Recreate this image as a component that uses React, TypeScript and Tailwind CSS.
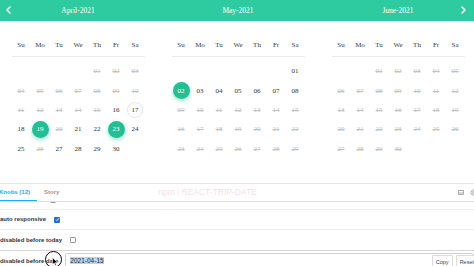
import React from 'react';

type DayState = 'normal' | 'disabled' | 'selected' | 'today';

interface MonthSpec {
  title: string;
  offset: number;
  days: number;
  stateOf: (d: number) => DayState;
}

const weekDays = ['Su', 'Mo', 'Tu', 'We', 'Th', 'Fr', 'Sa'];

const VISIBLE_CELLS = 35;

const months: MonthSpec[] = [
  {
    title: 'April-2021',
    offset: 4,
    days: 30,
    stateOf: (d) => {
      if (d === 19 || d === 23) return 'selected';
      if (d === 17) return 'today';
      if (d <= 15 || d === 20 || d === 26) return 'disabled';
      return 'normal';
    },
  },
  {
    title: 'May-2021',
    offset: 6,
    days: 31,
    stateOf: (d) => {
      if (d === 2) return 'selected';
      if (d >= 9) return 'disabled';
      return 'normal';
    },
  },
  {
    title: 'June-2021',
    offset: 2,
    days: 30,
    stateOf: () => 'disabled',
  },
];

const pad = (n: number) => (n < 10 ? `0${n}` : `${n}`);

const DayCell: React.FC<{ day?: number; state?: DayState }> = ({ day, state }) => {
  if (!day) return <div className="h-[19.4px]" />;
  let inner: React.ReactNode;
  if (state === 'selected') {
    inner = (
      <span className="w-[17px] h-[17px] rounded-full bg-[#22bf94] text-white flex items-center justify-center shadow-[0_2px_4px_rgba(34,191,148,0.45)]">
        {pad(day)}
      </span>
    );
  } else if (state === 'today') {
    inner = (
      <span className="w-[16px] h-[16px] rounded-full border border-[#e6e6e6] text-[#333] flex items-center justify-center">
        {pad(day)}
      </span>
    );
  } else if (state === 'disabled') {
    inner = <span className="text-[#c2c2c2] line-through decoration-[#c2c2c2]">{pad(day)}</span>;
  } else {
    inner = <span className="text-[#333]">{pad(day)}</span>;
  }
  return <div className="h-[19.4px] flex items-center justify-center">{inner}</div>;
};

const Chevron: React.FC<{ dir: 'left' | 'right' }> = ({ dir }) => (
  <svg width="5" height="8" viewBox="0 0 5 8" fill="none">
    <polyline
      points={dir === 'left' ? '4,1 1,4 4,7' : '1,1 4,4 1,7'}
      stroke="white"
      strokeWidth="1.5"
      strokeLinecap="round"
      strokeLinejoin="round"
    />
  </svg>
);

const Month: React.FC<{ spec: MonthSpec; width: string }> = ({ spec, width }) => {
  const cells: (number | undefined)[] = [];
  for (let i = 0; i < spec.offset; i++) cells.push(undefined);
  for (let d = 1; d <= spec.days; d++) cells.push(d);

  return (
    <div className={`${width} shrink-0`}>
      <div className="h-[21px] bg-[#2fcba0] pl-[11.5px] flex items-center">
        <div className="w-[133px] text-center text-white text-[7.5px] leading-none">{spec.title}</div>
      </div>
      <div className="pl-[11.5px]">
        <div className="w-[133px] pt-[18px] pb-[5px] border-b border-[#ececec]">
          <div className="grid grid-cols-7 h-[12px] items-center text-[7px] text-[#3a3a3a]">
            {weekDays.map((w) => (
              <div key={w} className="text-center">
                {w}
              </div>
            ))}
          </div>
        </div>
        <div className="w-[133px] mt-[4.75px] grid grid-cols-7 content-start text-[7px]">
          {cells.slice(0, VISIBLE_CELLS).map((d, i) => (
            <DayCell key={i} day={d} state={d ? spec.stateOf(d) : undefined} />
          ))}
        </div>
      </div>
    </div>
  );
};

const Checkbox: React.FC<{ checked?: boolean }> = ({ checked }) =>
  checked ? (
    <span className="w-[6px] h-[6px] rounded-[1px] bg-[#1a6fdc] flex items-center justify-center">
      <svg width="5" height="5" viewBox="0 0 5 5" fill="none">
        <polyline points="1,2.6 2,3.6 4,1.2" stroke="white" strokeWidth="0.9" />
      </svg>
    </span>
  ) : (
    <span className="w-[6px] h-[6px] rounded-[1px] border border-[#9a9a9a] bg-white" />
  );

export default function App() {
  return (
    <div
      className="w-[474px] h-[266px] bg-white overflow-hidden relative"
      style={{ fontFamily: '"Liberation Serif", serif' }}
    >
      {/* calendars */}
      <div className="h-[183px] relative">
        <div className="flex">
          <Month spec={months[0]} width="w-[160px]" />
          <Month spec={months[1]} width="w-[160px]" />
          <Month spec={months[2]} width="w-[154px]" />
        </div>
        <div className="absolute left-[6px] top-[6px]">
          <Chevron dir="left" />
        </div>
        <div className="absolute left-[461px] top-[6px]">
          <Chevron dir="right" />
        </div>
      </div>

      {/* storybook addon panel */}
      <div
        className="h-[83px] border-t border-[#e8e8e8] flex flex-col"
        style={{ fontFamily: '"Liberation Sans", Arial, sans-serif' }}
      >
        <div className="h-[18px] shrink-0 border-b border-[#e2e2e2] flex items-stretch relative">
          <div className="ml-[-1px] w-[38px] border-b-[1.5px] border-[#1ea7fd] flex items-center text-[6px] font-bold text-[#1ea7fd]">
            Knobs (12)
          </div>
          <div className="ml-[7px] flex items-center text-[6px] font-bold text-[#9a9a9a]">Story</div>
          <div className="ml-[99px] flex items-center text-[8.5px] text-[#f1e2e5]">
            npm i REACT-TRIP-DATE
          </div>
          <div className="ml-auto flex items-center gap-[6px] mr-[-3px]">
            <svg width="6" height="5" viewBox="0 0 6 5" fill="none">
              <rect x="0.5" y="0.5" width="5" height="4" stroke="#9a9a9a" strokeWidth="0.8" />
              <line x1="0.5" y1="3" x2="5.5" y2="3" stroke="#9a9a9a" strokeWidth="0.8" />
            </svg>
            <svg width="7" height="7" viewBox="0 0 7 7" fill="none">
              <circle cx="3.5" cy="3.5" r="2.6" stroke="#9a9a9a" strokeWidth="0.8" />
              <circle cx="3.5" cy="3.5" r="1" stroke="#9a9a9a" strokeWidth="0.8" />
            </svg>
          </div>
        </div>

        <div className="flex-1 overflow-hidden">
          <div className="mt-[-12px] text-[6px] font-bold text-[#333]">
            <div className="h-[20px] border-b border-[#efefef] flex items-center gap-[8px]">
              <span>disabled dates</span>
              <Checkbox />
            </div>
            <div className="h-[20px] border-b border-[#efefef] flex items-center gap-[8px]">
              <span>auto responsive</span>
              <Checkbox checked />
            </div>
            <div className="h-[21px] border-b border-[#d6d6d6] flex items-center gap-[8px]">
              <span>disabled before today</span>
              <Checkbox />
            </div>
            <div className="h-[20px] flex items-start gap-[7px]">
              <span className="mt-[6px]">disabled before date</span>
              <div className="mt-[2px] flex-1 h-[18px] border border-[#d0d0d0] rounded-[2px] pl-[4px] pt-[2px] font-normal text-[6.5px] text-[#333]">
                <span className="bg-[#b4d4fb]">2021-04-15</span>
              </div>
            </div>
          </div>
        </div>
      </div>

      {/* floating Copy / Reset */}
      <div
        className="absolute right-[-4px] bottom-[-3px] flex gap-[3px] text-[5.5px] text-[#444]"
        style={{ fontFamily: '"Liberation Sans", Arial, sans-serif' }}
      >
        <span className="px-[3px] py-[2px] border border-[#dcdcdc] bg-white rounded-[1px]">Copy</span>
        <span className="px-[3px] py-[2px] border border-[#dcdcdc] bg-white rounded-[1px]">Reset</span>
      </div>

      {/* screen-recording cursor highlight */}
      <div className="absolute left-[45px] top-[251px] w-[17px] h-[17px] rounded-full border-[1.5px] border-black" />
      <svg className="absolute left-[52px] top-[257px]" width="6" height="9" viewBox="0 0 6 9">
        <path
          d="M0.5 0.5 L0.5 7.5 L2.2 6 L3.4 8.6 L4.4 8.2 L3.3 5.6 L5.5 5.6 Z"
          fill="black"
          stroke="white"
          strokeWidth="0.6"
        />
      </svg>
    </div>
  );
}
